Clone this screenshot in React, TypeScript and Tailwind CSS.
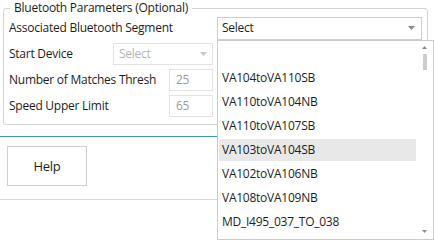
import { FC } from "react"

const segments = [
    "",
    "VA104toVA110SB",
    "VA110toVA104NB",
    "VA110toVA107SB",
    "VA103toVA104SB",
    "VA102toVA106NB",
    "VA108toVA109NB",
    "MD_I495_037_TO_038",
]

const Caret: FC<{ disabled?: boolean }> = ({ disabled }) => (
    <svg width="7" height="4" viewBox="0 0 7 4" className="shrink-0">
        <path d="M0 0h7L3.5 4z" fill={disabled ? "#c8c8c8" : "#8a8a8a"} />
    </svg>
)

const App: FC = () => {
    return (
        <div className="relative w-[434px] h-[240px] overflow-hidden bg-white text-[12px] leading-[16px] tracking-[-0.25px] text-[#1e1e1e] font-['Open_Sans',sans-serif]">
            <fieldset className="ml-[3px] w-[425px] border border-[#d5d5d5] rounded-[3px] pl-[5px] pr-[5px] pb-[7px] pt-[1px]">
                <legend className="ml-[1px] px-[4px] text-[#1e1e1e]">Bluetooth Parameters (Optional)</legend>
                <div className="flex flex-col gap-[4px]">
                    <div className="flex items-center h-[22px]">
                        <div className="flex-1">Associated Bluetooth Segment</div>
                        <div className="w-[205px] h-[23px] border border-[#cfcfcf] flex items-center justify-between pl-[4px] pr-[6px]">
                            <span>Select</span>
                            <Caret />
                        </div>
                    </div>
                    <div className="w-[204px] flex items-center justify-between h-[22px]">
                        <span>Start Device</span>
                        <div className="w-[100px] h-[22px] border border-[#e3e3e3] flex items-center justify-between pl-[5px] pr-[5px] text-[#b4b4b4]">
                            <span>Select</span>
                            <Caret disabled />
                        </div>
                    </div>
                    <div className="w-[204px] flex items-center justify-between h-[22px]">
                        <span>Number of Matches Thresh</span>
                        <div className="w-[44px] h-[22px] border border-[#e3e3e3] flex items-center pl-[6px] text-[#9a9a9a]">25</div>
                    </div>
                    <div className="w-[204px] flex items-center justify-between h-[22px]">
                        <span>Speed Upper Limit</span>
                        <div className="w-[44px] h-[22px] border border-[#e3e3e3] flex items-center pl-[6px] text-[#9a9a9a]">65</div>
                    </div>
                </div>
            </fieldset>

            <div className="mt-[11px] h-[1px] bg-[#3d94cf]" />
            <div className="pl-[7px] pt-[9px] pb-[13px]">
                <button className="w-[80px] h-[40px] border border-[#cfcfcf] bg-white text-[13px]">Help</button>
            </div>
            <div className="h-[1px] bg-[#d8d8d8]" />

            {/* dropdown popup */}
            <div className="absolute left-[217px] top-[40px] w-[217px] h-[200px] border border-[#cccccc] bg-white flex">
                <div className="flex-1 pt-[1px] pl-[1px]">
                    {segments.map((s, i) => (
                        <div key={i} className="h-[24px] py-[1px]">
                            <div className={`h-[22px] flex items-center pl-[3px] ${i === 4 ? "bg-[#e8e8e8]" : ""}`}>{s}</div>
                        </div>
                    ))}
                </div>
                <div className="w-[17px] flex flex-col items-center pt-[5px] pb-[6px]">
                    <svg width="5" height="3" viewBox="0 0 5 3"><path d="M0 3h5L2.5 0z" fill="#8a8a8a" /></svg>
                    <div className="mt-[5px] w-[4px] h-[16px] bg-[#cdcdcd]" />
                    <div className="flex-1" />
                    <svg width="5" height="3" viewBox="0 0 5 3"><path d="M0 0h5L2.5 3z" fill="#8a8a8a" /></svg>
                </div>
            </div>
        </div>
    )
}

export default App
